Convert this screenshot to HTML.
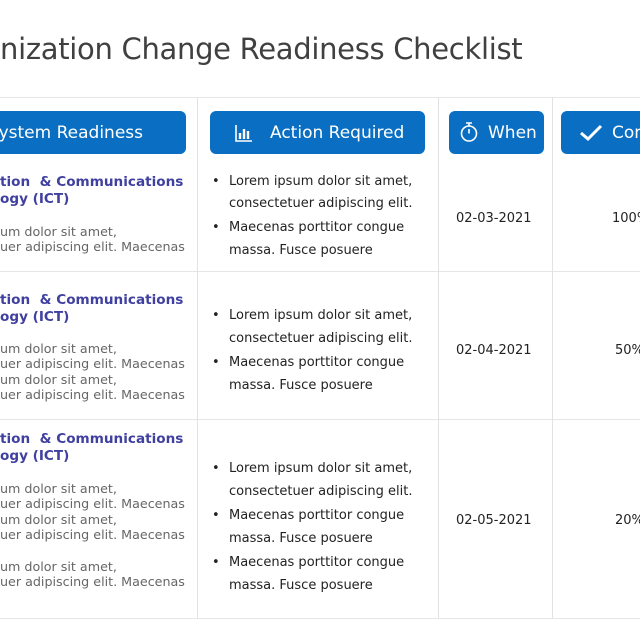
<!DOCTYPE html>
<html><head><style>
*{margin:0;padding:0;box-sizing:border-box}
body{width:640px;height:640px;overflow:hidden;background:#fff;position:relative;font-family:"DejaVu Sans","Liberation Sans",sans-serif}
.a{position:absolute;white-space:nowrap;line-height:16px}
.t{position:absolute;left:0px;top:32px;font-size:29px;color:#404040;font-family:"DejaVu Sans",sans-serif;white-space:nowrap;letter-spacing:-0.3px}
.h{position:absolute;top:111px;height:43px;background:#0a6fc2;border-radius:6px;color:#fff;font-size:17px;line-height:45px;white-space:nowrap;overflow:hidden}
.b{font-weight:bold;color:#4040a0;font-size:13.6px}
.g{color:#666;font-size:12.7px}
.l{color:#222;font-size:13px}
.vl{position:absolute;width:1px;background:#e2e2e2}
.hl{position:absolute;height:1px;background:#e6e6e6;left:0;width:640px}
</style></head><body>
<div class="t">nization Change Readiness Checklist</div>
<div class="hl" style="top:97px"></div>
<div class="hl" style="top:271px"></div>
<div class="hl" style="top:419px"></div>
<div class="hl" style="top:618px"></div>
<div class="vl" style="left:197px;top:97px;height:522px"></div>
<div class="vl" style="left:438px;top:97px;height:522px"></div>
<div class="vl" style="left:552px;top:97px;height:522px"></div>

<div class="h" style="left:-10px;width:196px;"><span style="position:absolute;right:43px">System Readiness</span></div>
<div class="h" style="left:210px;width:215px;">
<svg style="position:absolute;left:24px;top:12px" width="20" height="20" viewBox="0 0 20 20" fill="none" stroke="#fff" stroke-width="1.6"><path d="M2 2V18H18"/><path d="M6 16V10M10 16V6M14 16V8" stroke-width="2.4"/></svg>
<span style="position:absolute;left:60px">Action Required</span></div>
<div class="h" style="left:449px;width:95px;">
<svg style="position:absolute;left:10px;top:10px" width="20" height="22" viewBox="0 0 20 22" fill="none" stroke="#fff" stroke-width="1.6"><circle cx="10" cy="12.5" r="7.5"/><path d="M7 2H13M10 2V5M10 12.5V8"/></svg>
<span style="position:absolute;left:39px">When</span></div>
<div class="h" style="left:561px;width:100px;">
<svg style="position:absolute;left:18px;top:12px" width="24" height="20" viewBox="0 0 24 20" fill="none" stroke="#fff" stroke-width="3"><path d="M2 10L9 16L22 3"/></svg>
<span style="position:absolute;left:51px">Com</span></div>

<!-- row1 -->
<div class="a b" style="left:0;top:174px">tion&nbsp; &amp; Communications</div>
<div class="a b" style="left:0;top:191px">ogy (ICT)</div>
<div class="a g" style="left:0;top:224px">um dolor sit amet,</div>
<div class="a g" style="left:0;top:239px">uer adipiscing elit. Maecenas</div>
<div class="a l" style="left:212px;top:174px">•</div><div class="a l" style="left:229px;top:174px">Lorem ipsum dolor sit amet,</div>
<div class="a l" style="left:229px;top:196px">consectetuer adipiscing elit.</div>
<div class="a l" style="left:212px;top:220px">•</div><div class="a l" style="left:229px;top:220px">Maecenas porttitor congue</div>
<div class="a l" style="left:229px;top:243px">massa. Fusce posuere</div>
<div class="a l" style="left:456px;top:211px">02-03-2021</div>
<div class="a l" style="left:612px;top:211px">100%</div>

<!-- row2 -->
<div class="a b" style="left:0;top:292px">tion&nbsp; &amp; Communications</div>
<div class="a b" style="left:0;top:309px">ogy (ICT)</div>
<div class="a g" style="left:0;top:341px">um dolor sit amet,</div>
<div class="a g" style="left:0;top:356px">uer adipiscing elit. Maecenas</div>
<div class="a g" style="left:0;top:372px">um dolor sit amet,</div>
<div class="a g" style="left:0;top:387px">uer adipiscing elit. Maecenas</div>
<div class="a l" style="left:212px;top:308px">•</div><div class="a l" style="left:229px;top:308px">Lorem ipsum dolor sit amet,</div>
<div class="a l" style="left:229px;top:331px">consectetuer adipiscing elit.</div>
<div class="a l" style="left:212px;top:355px">•</div><div class="a l" style="left:229px;top:355px">Maecenas porttitor congue</div>
<div class="a l" style="left:229px;top:378px">massa. Fusce posuere</div>
<div class="a l" style="left:456px;top:343px">02-04-2021</div>
<div class="a l" style="left:615px;top:343px">50%</div>

<!-- row3 -->
<div class="a b" style="left:0;top:431px">tion&nbsp; &amp; Communications</div>
<div class="a b" style="left:0;top:448px">ogy (ICT)</div>
<div class="a g" style="left:0;top:481px">um dolor sit amet,</div>
<div class="a g" style="left:0;top:496px">uer adipiscing elit. Maecenas</div>
<div class="a g" style="left:0;top:512px">um dolor sit amet,</div>
<div class="a g" style="left:0;top:527px">uer adipiscing elit. Maecenas</div>
<div class="a g" style="left:0;top:559px">um dolor sit amet,</div>
<div class="a g" style="left:0;top:574px">uer adipiscing elit. Maecenas</div>
<div class="a l" style="left:212px;top:461px">•</div><div class="a l" style="left:229px;top:461px">Lorem ipsum dolor sit amet,</div>
<div class="a l" style="left:229px;top:484px">consectetuer adipiscing elit.</div>
<div class="a l" style="left:212px;top:508px">•</div><div class="a l" style="left:229px;top:508px">Maecenas porttitor congue</div>
<div class="a l" style="left:229px;top:531px">massa. Fusce posuere</div>
<div class="a l" style="left:212px;top:555px">•</div><div class="a l" style="left:229px;top:555px">Maecenas porttitor congue</div>
<div class="a l" style="left:229px;top:578px">massa. Fusce posuere</div>
<div class="a l" style="left:456px;top:513px">02-05-2021</div>
<div class="a l" style="left:615px;top:513px">20%</div>
</body></html>
